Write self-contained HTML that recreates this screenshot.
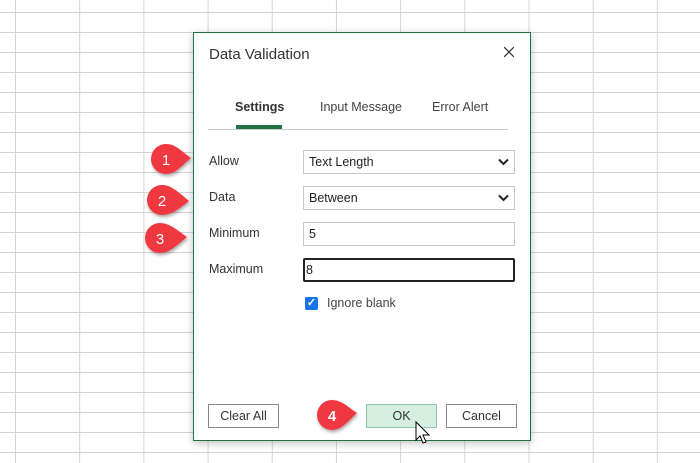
<!DOCTYPE html>
<html><head><meta charset="utf-8"><style>
body{margin:0;width:700px;height:463px;overflow:hidden;background:#fff;font-family:"Liberation Sans",sans-serif;position:relative}
.grid{position:absolute;inset:0;background-image:linear-gradient(to right,#d4d4d4 1px,transparent 1px),linear-gradient(to bottom,#d4d4d4 1px,transparent 1px);background-size:64.2px 20px,64px 20px;background-position:15px 0,0 12px}
.dlg{position:absolute;left:193px;top:32px;width:336px;height:407px;background:#fff;border:1px solid #217346;box-shadow:0 2px 8px rgba(0,0,0,.25)}
.t{position:absolute;font-size:13px;color:#333}
.box{position:absolute;left:109px;width:212px;height:24px;border:1px solid #c8c8c8;box-sizing:border-box;font-size:12.5px;color:#222;line-height:22px;padding-left:5px}
.box svg{position:absolute;right:5px;top:7px}
.btn{position:absolute;top:371px;height:24px;border:1px solid #8a8a8a;box-sizing:border-box;font-size:12.5px;color:#333;text-align:center;line-height:22px}
</style></head><body>
<div class="grid"></div>
<div class="dlg">
<div class="t" style="left:15px;top:13px;font-size:15px">Data Validation</div>
<svg style="position:absolute;left:310px;top:14px" width="10" height="10"><path d="M0 0L10 10M10 0L0 10" stroke="#333" stroke-width="1.3"/></svg>
<div class="t" style="left:41px;top:67px;font-weight:bold;font-size:12.5px">Settings</div>
<div style="position:absolute;left:42px;top:92px;width:46px;height:4px;background:#217346"></div>
<div class="t" style="left:126px;top:67px;font-size:12.5px;color:#444">Input Message</div>
<div class="t" style="left:238px;top:67px;font-size:12.5px;color:#444">Error Alert</div>
<div style="position:absolute;left:14px;top:96px;width:300px;height:1px;background:#ccc"></div>
<div class="t" style="left:15px;top:121px;font-size:12.5px">Allow</div>
<div class="t" style="left:15px;top:157px;font-size:12.5px">Data</div>
<div class="t" style="left:15px;top:193px;font-size:12.5px">Minimum</div>
<div class="t" style="left:15px;top:229px;font-size:12.5px">Maximum</div>
<div class="box" style="top:117px">Text Length<svg width="11" height="8"><path d="M1 1.5L5.5 6L10 1.5" stroke="#222" stroke-width="2" fill="none"/></svg></div>
<div class="box" style="top:153px">Between<svg width="11" height="8"><path d="M1 1.5L5.5 6L10 1.5" stroke="#222" stroke-width="2" fill="none"/></svg></div>
<div class="box" style="top:189px">5</div>
<div class="box" style="top:225px;border:2px solid #222;border-radius:2px;padding-left:1px;line-height:20px">8</div>
<div style="position:absolute;left:111px;top:264px;width:13px;height:13px;background:#1a73e8;border-radius:2px;color:#fff;font-size:11px;line-height:13px;text-align:center;font-weight:bold">✓</div>
<div class="t" style="left:133px;top:263px;font-size:12.5px;color:#444">Ignore blank</div>
<div class="btn" style="left:14px;width:71px">Clear All</div>
<div class="btn" style="left:172px;width:71px;background:#d4efe0;border-color:#8fc9a5">OK</div>
<div class="btn" style="left:252px;width:71px">Cancel</div>
</div>
<svg width="700" height="463" style="position:absolute;left:0;top:0">
<defs><filter id="s"><feDropShadow dx="1" dy="2" stdDeviation="1.5" flood-opacity=".35"/></filter></defs>
<g fill="#f0393f" filter="url(#s)">
<path d="M166 144 C176 144 182 152 191 158 C182 165 176 174 166 174 A15 15 0 0 1 166 144Z"/>
<path d="M162 185 C172 185 180 194 189 201 C180 208 172 215 162 215 A15 15 0 0 1 162 185Z"/>
<path d="M160 223 C170 223 178 231 187 237 C178 244 170 253 160 253 A15 15 0 0 1 160 223Z"/>
<path d="M332 400 C342 400 349 408 357 413 C349 420 342 430 332 430 A15 15 0 0 1 332 400Z"/>
</g>
<g fill="#fff" font-size="15" font-family="Liberation Sans" text-anchor="middle">
<text x="166" y="165">1</text><text x="162" y="206">2</text><text x="160" y="244">3</text><text x="332" y="421" font-weight="bold">4</text>
</g>
<path d="M416 422 L416 440 L420 436 L423 443 L426 442 L423 435 L429 435 Z" fill="#fff" stroke="#000" stroke-width="1"/>
</svg>
</body></html>
